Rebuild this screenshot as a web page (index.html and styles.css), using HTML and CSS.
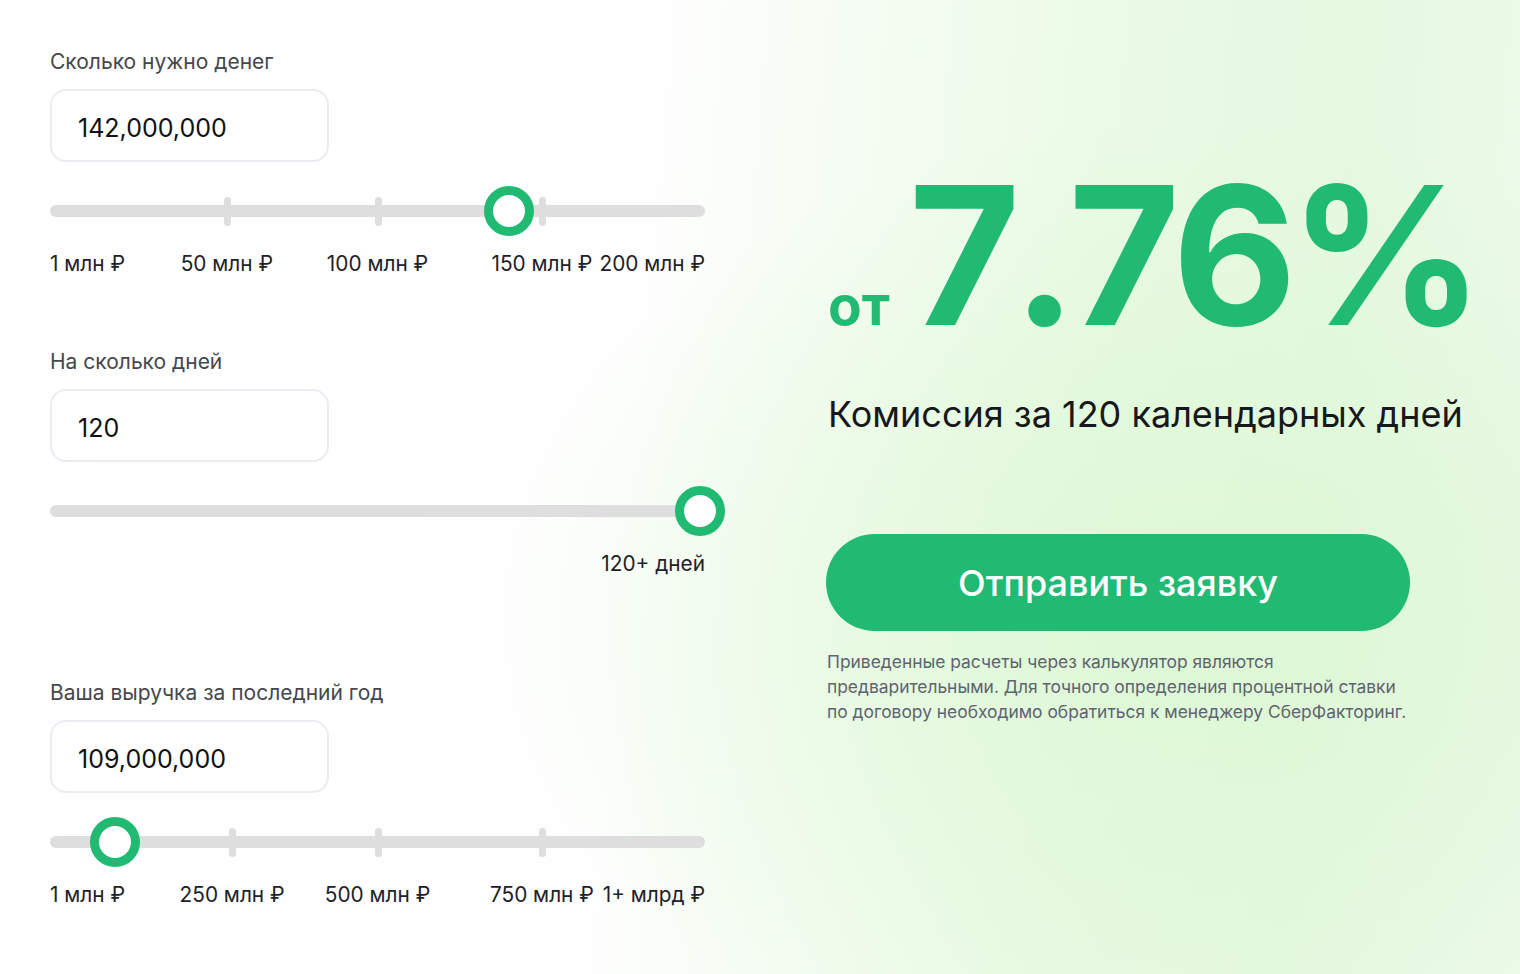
FILE: index.html
```html
<!DOCTYPE html>
<html lang="ru">
<head>
<meta charset="utf-8">
<title>Калькулятор</title>
<link rel="stylesheet" href="styles.css">
</head>
<body>
<main class="page">
  <section class="calc">
    <div class="field">
      <div class="field-label">Сколько нужно денег</div>
      <div class="input-box">142,000,000</div>
      <div class="slider">
        <div class="track"></div>
        <span class="tick" style="left:27%"></span>
        <span class="tick" style="left:50%"></span>
        <span class="tick" style="left:75.1%"></span>
        <span class="thumb" style="left:70.1%"></span>
      </div>
      <div class="marks">
        <span class="mark mark-start">1 млн ₽</span>
        <span class="mark" style="left:27%">50 млн ₽</span>
        <span class="mark" style="left:50%">100 млн ₽</span>
        <span class="mark" style="left:75.1%">150 млн ₽</span>
        <span class="mark mark-end">200 млн ₽</span>
      </div>
    </div>

    <div class="field field-days">
      <div class="field-label">На сколько дней</div>
      <div class="input-box">120</div>
      <div class="slider">
        <div class="track"></div>
        <span class="thumb" style="left:99.2%"></span>
      </div>
      <div class="marks">
        <span class="mark mark-end">120+ дней</span>
      </div>
    </div>

    <div class="field field-revenue">
      <div class="field-label">Ваша выручка за последний год</div>
      <div class="input-box">109,000,000</div>
      <div class="slider">
        <div class="track"></div>
        <span class="tick" style="left:27.8%"></span>
        <span class="tick" style="left:50%"></span>
        <span class="tick" style="left:75.1%"></span>
        <span class="thumb" style="left:9.9%"></span>
      </div>
      <div class="marks">
        <span class="mark mark-start">1 млн ₽</span>
        <span class="mark" style="left:27.8%">250 млн ₽</span>
        <span class="mark" style="left:50%">500 млн ₽</span>
        <span class="mark" style="left:75.1%">750 млн ₽</span>
        <span class="mark mark-end">1+ млрд ₽</span>
      </div>
    </div>
  </section>

  <section class="result">
    <div class="rate">
      <span class="rate-prefix">от</span>
      <span class="rate-value">7.76%</span>
    </div>
    <div class="rate-caption">Комиссия за 120 календарных дней</div>
    <button class="submit" type="button">Отправить заявку</button>
    <p class="disclaimer">Приведенные расчеты через калькулятор являются предварительными. Для точного определения процентной ставки по договору необходимо обратиться к менеджеру СберФакторинг.</p>
  </section>
</main>
</body>
</html>
```

FILE: styles.css
```css
* { box-sizing: border-box; }

html, body {
  margin: 0;
  padding: 0;
}

body {
  width: 1520px;
  height: 974px;
  overflow: hidden;
  font-family: Inter, "Noto Sans", sans-serif;
  color: #1c1c1e;
  background:
    radial-gradient(ellipse 700px 500px at 1200px 620px, rgba(220, 248, 212, 0.9), rgba(220, 248, 212, 0) 100%),
    linear-gradient(95deg, #ffffff 0%, #fdfefd 42%, #f4fcf1 56%, #eafae5 70%, #e6f9e1 85%, #eefaeb 100%);
}

.page {
  display: flex;
  align-items: flex-start;
  height: 974px;
}

.calc {
  width: 655px;
  margin-left: 50px;
  padding-top: 50px;
  display: flex;
  flex-direction: column;
}

.field-label {
  font-size: 21px;
  line-height: 24px;
  color: #45474d;
}

.input-box {
  margin-top: 15px;
  width: 279px;
  height: 73px;
  padding: 5px 26px 0;
  display: flex;
  align-items: center;
  background: #ffffff;
  border: 2px solid #eaecf1;
  border-radius: 16px;
  font-size: 25px;
  color: #111111;
}

.slider {
  position: relative;
  margin-top: 24px;
  height: 50px;
}

.track {
  position: absolute;
  left: 0;
  right: 0;
  top: 19px;
  height: 12px;
  border-radius: 6px;
  background: #dedede;
}

.tick {
  position: absolute;
  top: 11px;
  width: 7px;
  height: 29px;
  margin-left: -3px;
  border-radius: 4px;
  background: #dedede;
}

.thumb {
  position: absolute;
  top: 0;
  width: 50px;
  height: 50px;
  margin-left: -25px;
  border-radius: 50%;
  background: #ffffff;
  border: 9px solid #21ba72;
}

.marks {
  position: relative;
  margin-top: 16px;
  height: 24px;
  font-size: 20.8px;
  line-height: 24px;
  color: #1f2128;
}

.mark {
  position: absolute;
  top: 0;
  white-space: nowrap;
  transform: translateX(-50%);
}

.mark-start {
  left: 0;
  transform: none;
}

.mark-end {
  left: auto;
  right: 0;
  transform: none;
}

.field-days {
  margin-top: 74px;
}

.field-revenue {
  margin-top: 105px;
}

.result {
  margin-left: 121px;
  padding-top: 159px;
  width: 660px;
  display: flex;
  flex-direction: column;
}

.rate {
  display: flex;
  align-items: baseline;
  color: #21ba72;
  font-weight: 700;
  line-height: 1;
  margin-left: 2px;
  white-space: nowrap;
}

.rate-prefix {
  font-size: 55px;
  margin-right: 19px;
}

.rate-value {
  font-size: 192px;
  letter-spacing: -8px;
  font-kerning: none;
}

.rate-caption {
  margin-top: 41px;
  font-size: 36px;
  line-height: 44px;
  font-weight: 400;
  color: #17181c;
  margin-left: 2px;
}

.submit {
  margin-top: 98px;
  width: 584px;
  height: 97px;
  border: none;
  border-radius: 49px;
  background: #21ba72;
  color: #ffffff;
  font-family: Inter, "Noto Sans", sans-serif;
  font-size: 36px;
  font-weight: 500;
  cursor: pointer;
}

.disclaimer {
  margin: 18px 0 0 1px;
  width: 585px;
  font-size: 17.4px;
  line-height: 25px;
  color: #5e636f;
}
```
